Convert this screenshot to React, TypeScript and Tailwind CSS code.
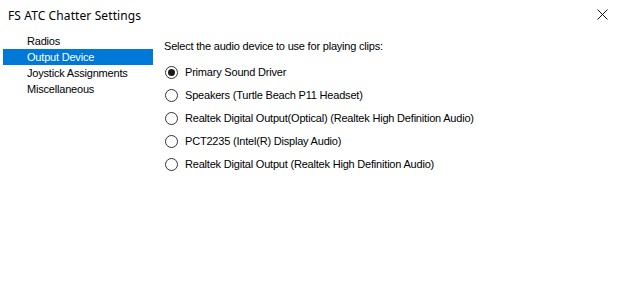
import { useState } from "react";

const sections = ["Radios", "Output Device", "Joystick Assignments", "Miscellaneous"];

const devices = [
  "Primary Sound Driver",
  "Speakers (Turtle Beach P11 Headset)",
  "Realtek Digital Output(Optical) (Realtek High Definition Audio)",
  "PCT2235 (Intel(R) Display Audio)",
  "Realtek Digital Output (Realtek High Definition Audio)",
];

function Radio({ checked }: { checked: boolean }) {
  return (
    <span className="w-[13px] h-[13px] rounded-full border border-[#333333] bg-white flex items-center justify-center shrink-0">
      {checked && <span className="w-[7px] h-[7px] rounded-full bg-[#1a1a1a]" />}
    </span>
  );
}

export default function App() {
  const [section, setSection] = useState(1);
  const [device, setDevice] = useState(0);

  return (
    <div className="w-[622px] h-[282px] bg-white text-black overflow-hidden relative select-none">
      {/* Title bar */}
      <div className="h-[31px] flex items-center pl-[8px] text-[12px] tracking-[0.1px] text-[#000] font-['Noto_Sans',sans-serif]">
        FS ATC Chatter Settings
      </div>
      <button className="absolute top-[3px] right-[6px] w-[28px] h-[22px] flex items-center justify-center">
        <svg width="11" height="11" viewBox="0 0 11 11">
          <path d="M0.5 0.5 L10.5 10.5 M10.5 0.5 L0.5 10.5" stroke="#111" strokeWidth="1" />
        </svg>
      </button>

      <div className="flex font-['Liberation_Sans',Arial,sans-serif] text-[11px] tracking-[-0.2px]">
        {/* Sidebar list */}
        <div className="w-[150px] ml-[3px] mt-[2px] flex flex-col">
          {sections.map((s, i) => (
            <div
              key={s}
              onClick={() => setSection(i)}
              className={`h-[16px] leading-[16px] pl-[24px] ${
                section === i ? "bg-[#0078d7] text-white" : "text-black"
              }`}
            >
              {s}
            </div>
          ))}
        </div>

        {/* Content */}
        <div className="ml-[11px] mt-[8px] flex flex-col">
          <div className="h-[14px] leading-[14px]">Select the audio device to use for playing clips:</div>
          <div className="mt-[13px] flex flex-col gap-[10px]">
            {devices.map((d, i) => (
              <label
                key={d}
                onClick={() => setDevice(i)}
                className="h-[13px] flex items-center gap-[7px] ml-[1px]"
              >
                <Radio checked={device === i} />
                <span className="leading-[13px]">{d}</span>
              </label>
            ))}
          </div>
        </div>
      </div>
    </div>
  );
}
